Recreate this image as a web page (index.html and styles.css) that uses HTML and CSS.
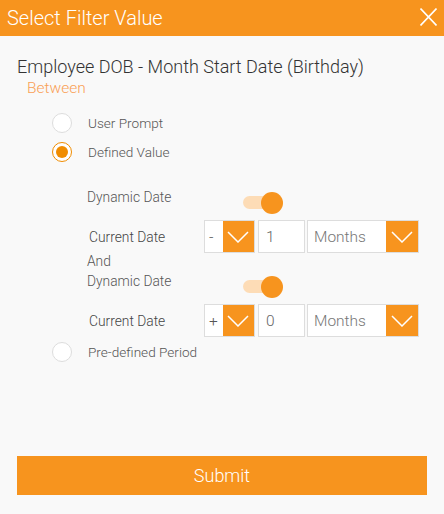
FILE: index.html
```html
<!DOCTYPE html>
<html>
<head>
<meta charset="utf-8">
<link rel="stylesheet" href="styles.css">
</head>
<body>
<div class="dialog">
  <header class="header">
    <span class="title">Select Filter Value</span>
    <svg class="close" width="17" height="18" viewBox="0 0 17 18"><path d="M0.5 0.5 L16.5 17.5 M16.5 0.5 L0.5 17.5" stroke="#fff" stroke-width="1.6" fill="none"/></svg>
  </header>
  <main class="content">
    <div class="field-title">Employee DOB - Month Start Date (Birthday)</div>
    <div class="operator">Between</div>
    <div class="radio-row first"><span class="radio"></span><span class="radio-label">User Prompt</span></div>
    <div class="radio-row"><span class="radio checked"><span class="dot"></span></span><span class="radio-label">Defined Value</span></div>
    <div class="defined">
      <div class="dyn-row">
        <span class="dyn-label">Dynamic Date</span>
        <span class="toggle"><span class="track"></span><span class="knob"></span></span>
      </div>
      <div class="date-row">
        <span class="date-label">Current Date</span>
        <div class="sign-box"><span class="sign">-</span><span class="dd-btn"><svg width="22" height="12" viewBox="0 0 22 12"><path d="M1 1 L11 11 L21 1" stroke="#fff" stroke-width="1.5" fill="none"/></svg></span></div>
        <div class="num-box">1</div>
        <div class="unit-box"><span class="unit">Months</span><span class="dd-btn"><svg width="22" height="12" viewBox="0 0 22 12"><path d="M1 1 L11 11 L21 1" stroke="#fff" stroke-width="1.5" fill="none"/></svg></span></div>
      </div>
      <div class="and">And</div>
      <div class="dyn-row second">
        <span class="dyn-label">Dynamic Date</span>
        <span class="toggle"><span class="track"></span><span class="knob"></span></span>
      </div>
      <div class="date-row">
        <span class="date-label">Current Date</span>
        <div class="sign-box"><span class="sign">+</span><span class="dd-btn"><svg width="22" height="12" viewBox="0 0 22 12"><path d="M1 1 L11 11 L21 1" stroke="#fff" stroke-width="1.5" fill="none"/></svg></span></div>
        <div class="num-box">0</div>
        <div class="unit-box"><span class="unit">Months</span><span class="dd-btn"><svg width="22" height="12" viewBox="0 0 22 12"><path d="M1 1 L11 11 L21 1" stroke="#fff" stroke-width="1.5" fill="none"/></svg></span></div>
      </div>
    </div>
    <div class="radio-row last"><span class="radio"></span><span class="radio-label">Pre-defined Period</span></div>
  </main>
  <footer class="footer">
    <button class="submit">Submit</button>
  </footer>
</div>
</body>
</html>
```

FILE: styles.css
```css
* { box-sizing: border-box; }
html, body { margin: 0; padding: 0; }
body {
  background: #f9f9f9;
  font-family: Roboto, "Liberation Sans", sans-serif;
  font-weight: 300;
}
.dialog {
  width: 444px;
  height: 514px;
  display: flex;
  flex-direction: column;
  background: #f9f9f9;
}
.header {
  height: 36px;
  background: #f7941e;
  display: flex;
  align-items: center;
  justify-content: space-between;
  padding: 0 7px 0 7px;
  flex-shrink: 0;
}
.title {
  color: #fff;
  font-size: 20px;
  line-height: 22px;
}
.close { display: block; margin-top: -2px; }
.content {
  padding: 0 17px;
}
.field-title {
  margin-top: 21px;
  font-size: 18px;
  line-height: 20px;
  color: #333;
}
.operator {
  margin-top: 2px;
  padding-left: 10px;
  font-size: 15.5px;
  line-height: 18px;
  color: #f9a055;
}
.radio-row {
  display: flex;
  align-items: center;
  height: 20px;
  padding-left: 35px;
  margin-top: 9px;
}
.radio-row.first { margin-top: 16px; }
.radio-row.last { margin-top: 5px; }
.radio {
  width: 20px;
  height: 20px;
  border-radius: 50%;
  border: 1px solid #ddd;
  background: #fff;
  display: flex;
  align-items: center;
  justify-content: center;
  flex-shrink: 0;
}
.radio.checked { border: 1.5px solid #f08c00; }
.dot {
  width: 12px;
  height: 12px;
  border-radius: 50%;
  background: #f08c00;
}
.radio-label {
  margin-left: 16px;
  font-size: 13.6px;
  color: #555;
}
.defined {
  padding-left: 70px;
}
.dyn-row {
  display: flex;
  align-items: flex-start;
  margin-top: 27px;
}
.dyn-row.second { margin-top: 4px; }
.dyn-label {
  width: 156px;
  font-size: 13.8px;
  line-height: 16px;
  color: #555;
}
.toggle {
  position: relative;
  width: 40px;
  height: 22px;
  margin-top: 3px;
}
.track {
  position: absolute;
  left: 0;
  top: 4px;
  width: 32px;
  height: 13px;
  border-radius: 7px;
  background: #fddcb6;
}
.knob {
  position: absolute;
  left: 18px;
  top: 0;
  width: 22px;
  height: 22px;
  border-radius: 50%;
  background: #f7941e;
}
.date-row {
  display: flex;
  align-items: center;
  margin-top: 6px;
  height: 33px;
}
.date-label {
  width: 117px;
  padding-left: 2px;
  font-size: 13.8px;
  color: #444;
}
.sign-box, .num-box, .unit-box {
  height: 33px;
  border: 1px solid #ddd;
  background: #fff;
  display: flex;
  align-items: stretch;
  font-size: 15.5px;
  color: #666;
}
.sign-box { width: 51px; }
.sign {
  width: 18px;
  padding-left: 4px;
  display: flex;
  align-items: center;
  color: #555;
}
.dd-btn {
  width: 32px;
  background: #f7941e;
  display: flex;
  align-items: center;
  justify-content: center;
}
.num-box {
  width: 47px;
  margin-left: 3px;
  align-items: center;
  padding-left: 7px;
}
.unit-box {
  width: 112px;
  margin-left: 2px;
  justify-content: space-between;
}
.unit {
  display: flex;
  align-items: center;
  padding-left: 6px;
  color: #777;
}
.and {
  font-size: 13.8px;
  line-height: 16px;
  color: #555;
}
.footer {
  margin-top: auto;
  padding: 0 17px 19px;
}
.submit {
  display: block;
  width: 410px;
  height: 39px;
  border: none;
  background: #f7941e;
  color: #fff;
  font-family: Roboto, "Liberation Sans", sans-serif;
  font-weight: 300;
  font-size: 18px;
  cursor: pointer;
}
```
